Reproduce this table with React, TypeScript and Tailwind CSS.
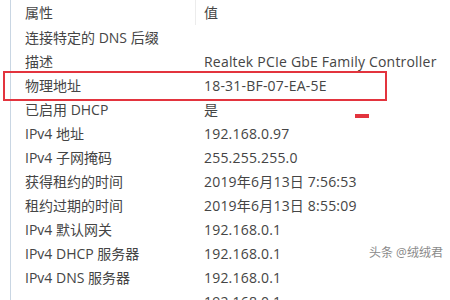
const rows: [string, string][] = [
  ["连接特定的 DNS 后缀", ""],
  ["描述", "Realtek PCIe GbE Family Controller"],
  ["物理地址", "18-31-BF-07-EA-5E"],
  ["已启用 DHCP", "是"],
  ["IPv4 地址", "192.168.0.97"],
  ["IPv4 子网掩码", "255.255.255.0"],
  ["获得租约的时间", "2019年6月13日 7:56:53"],
  ["租约过期的时间", "2019年6月13日 8:55:09"],
  ["IPv4 默认网关", "192.168.0.1"],
  ["IPv4 DHCP 服务器", "192.168.0.1"],
  ["IPv4 DNS 服务器", "192.168.0.1"],
  ["", "192.168.0.1"],
];

const font = { fontFamily: '"Open Sans", "Noto Sans CJK SC", sans-serif' };

export default function App() {
  return (
    <div
      className="relative w-[450px] h-[300px] overflow-hidden bg-white text-[14px] text-[#454545]"
      style={font}
    >
      {/* left pane edge */}
      <div className="absolute left-[10px] top-0 h-full w-px bg-[#c9d6e3]" />

      <div className="flex flex-col">
        <div className="flex h-[25px] items-center">
          <div className="w-[196px] pl-[25px] border-r border-[#ececec] h-full flex items-center">属性</div>
          <div className="pl-[8px]">值</div>
        </div>
        {rows.map(([label, value], i) => (
          <div key={i} className="flex h-6 items-center whitespace-nowrap">
            <div className="w-[196px] pl-[25px]">{label}</div>
            <div className="pl-[8px] tracking-[0.2px]">{value}</div>
          </div>
        ))}
      </div>

      {/* annotation */}
      <div className="absolute left-[3px] top-[71px] w-[384px] h-[30px] border-2 border-[#e3343e]" />
      <div className="absolute left-[355px] top-[114px] w-[14px] h-[4px] bg-[#e3343e]" />

      <div
        className="absolute left-[369px] top-[244px] whitespace-nowrap text-[12px] text-[#8a8a8a]"
        style={{ textShadow: "0 0 2px #fff" }}
      >
        头条 @绒绒君
      </div>
    </div>
  );
}
